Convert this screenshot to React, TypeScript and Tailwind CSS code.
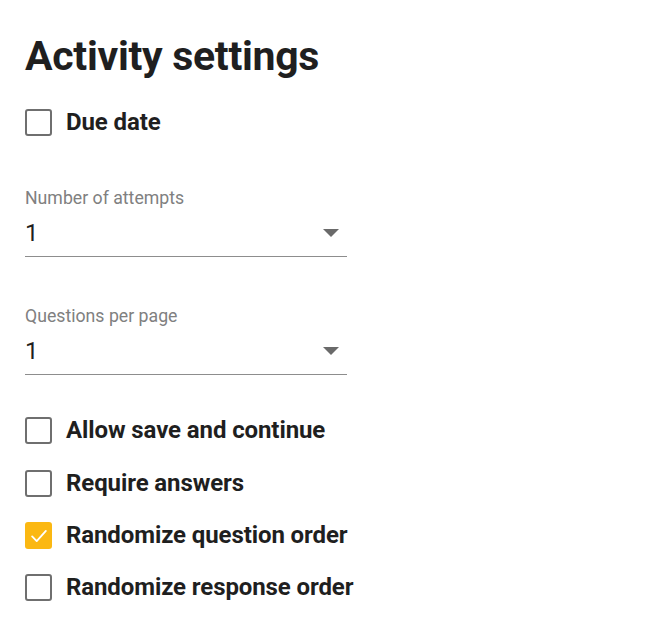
import React from "react";

function Box({ checked }: { checked?: boolean }) {
  if (checked) {
    return (
      <div className="w-[27px] h-[27px] rounded-[3px] bg-[#fbb812] flex items-center justify-center shrink-0">
        <svg width="22" height="22" viewBox="0 0 24 24" fill="none">
          <path d="M4.5 12.5l5 5L19.5 6.5" stroke="#fff" strokeWidth="2" strokeLinecap="round" strokeLinejoin="round" />
        </svg>
      </div>
    );
  }
  return <div className="w-[27px] h-[27px] rounded-[3px] border-2 border-[#6f6f6f] bg-white shrink-0" />;
}

function Row({ label, checked, className = "" }: { label: string; checked?: boolean; className?: string }) {
  return (
    <div className={"flex items-center h-[27px] gap-[14px] " + className}>
      <Box checked={checked} />
      <span className="text-[24px] font-bold text-[#1f1f1f] leading-[27px] tracking-[-0.1px]">{label}</span>
    </div>
  );
}

function Select({ label, value, className = "" }: { label: string; value: string; className?: string }) {
  return (
    <div className={"w-[322px] " + className}>
      <div className="text-[17.7px] leading-[20px] text-[#808080]">{label}</div>
      <div className="mt-[11px] flex items-center justify-between h-[28px] border-b border-[#8d8d8d] box-content pb-[9px]">
        <span className="text-[24px] leading-[28px] text-[#1f1f1f]">{value}</span>
        <svg width="16" height="8" viewBox="0 0 16 8" className="mr-[8px]">
          <path d="M0 0h16L8 8z" fill="#6a6a6a" />
        </svg>
      </div>
    </div>
  );
}

export default function App() {
  return (
    <div className="w-[672px] h-[636px] bg-white pl-[25px] pt-[31px]" style={{ fontFamily: "Roboto, 'Liberation Sans', sans-serif" }}>
      <h1 className="text-[41px] leading-[50px] font-bold text-[#1f1f1f] tracking-[-0.3px]">Activity settings</h1>
      <Row label="Due date" className="mt-[28px]" />
      <Select label="Number of attempts" value="1" className="mt-[52px]" />
      <Select label="Questions per page" value="1" className="mt-[49px]" />
      <Row label="Allow save and continue" className="mt-[42px]" />
      <Row label="Require answers" className="mt-[26px]" />
      <Row label="Randomize question order" checked className="mt-[25px]" />
      <Row label="Randomize response order" className="mt-[25px]" />
    </div>
  );
}
